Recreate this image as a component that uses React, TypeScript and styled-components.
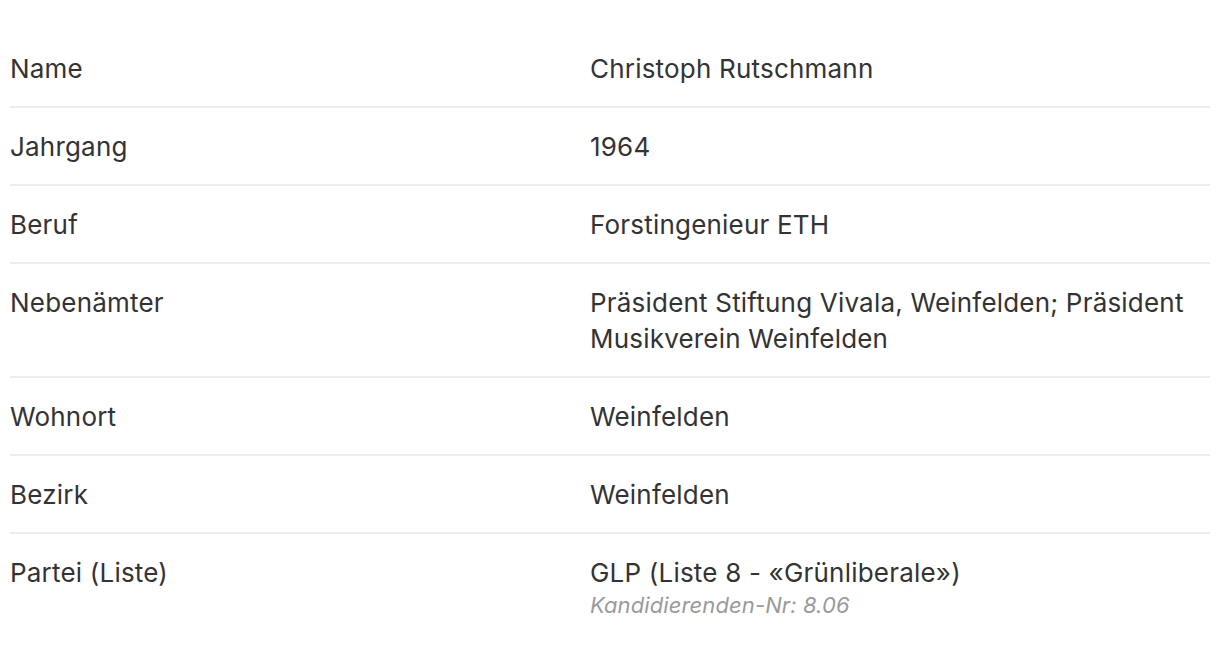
import React from "react";
import styled, { createGlobalStyle } from "styled-components";

const Global = createGlobalStyle`
  body {
    margin: 0;
    background: #ffffff;
    font-family: "Inter", "Noto Sans", sans-serif;
    color: #333333;
  }
`;

const Table = styled.div`
  margin: 30px 10px 0 10px;
  display: flex;
  flex-direction: column;
`;

const Row = styled.div<{ $last?: boolean }>`
  display: grid;
  grid-template-columns: 580px 1fr;
  padding: 21px 0 19px 0;
  border-bottom: ${(p) => (p.$last ? "none" : "2px solid #ededed")};
`;

const Label = styled.div`
  font-size: 26px;
  line-height: 36px;
  letter-spacing: 0.2px;
`;

const Value = styled.div`
  font-size: 26px;
  line-height: 36px;
  letter-spacing: 0.2px;
`;

const Sub = styled.div`
  font-size: 22px;
  line-height: 27px;
  margin-top: 1px;
  font-style: italic;
  letter-spacing: 0.1px;
  color: #9a9a9a;
`;

const rows: { label: string; value: string; sub?: string }[] = [
  { label: "Name", value: "Christoph Rutschmann" },
  { label: "Jahrgang", value: "1964" },
  { label: "Beruf", value: "Forstingenieur ETH" },
  {
    label: "Nebenämter",
    value: "Präsident Stiftung Vivala, Weinfelden; Präsident Musikverein Weinfelden",
  },
  { label: "Wohnort", value: "Weinfelden" },
  { label: "Bezirk", value: "Weinfelden" },
  {
    label: "Partei (Liste)",
    value: "GLP (Liste 8 - «Grünliberale»)",
    sub: "Kandidierenden-Nr: 8.06",
  },
];

export default function App() {
  return (
    <>
      <Global />
      <Table>
        {rows.map((r, i) => (
          <Row key={r.label} $last={i === rows.length - 1}>
            <Label>{r.label}</Label>
            <Value>
              {r.value}
              {r.sub && <Sub>{r.sub}</Sub>}
            </Value>
          </Row>
        ))}
      </Table>
    </>
  );
}
